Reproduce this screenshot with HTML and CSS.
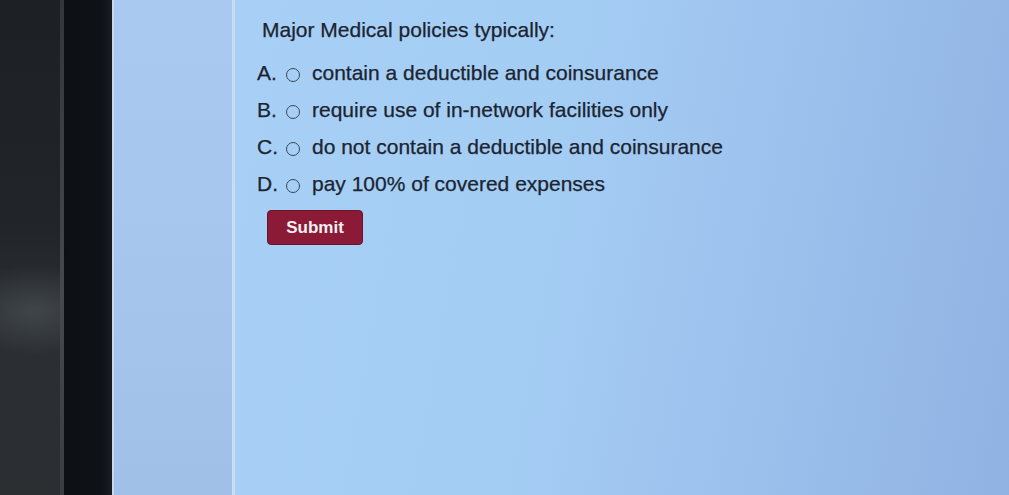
FILE: index.html
```html
<!DOCTYPE html>
<html>
<head>
<meta charset="utf-8">
<link rel="stylesheet" href="styles.css">
<title>Quiz</title>
</head>
<body>
<div class="screen">
  <div class="bezel">
    <div class="bezel-outer"></div>
    <div class="bezel-edge"></div>
    <div class="bezel-inner"></div>
  </div>
  <div class="sidebar"></div>
  <div class="divider"></div>
  <main class="content">
    <p class="question">Major Medical policies typically:</p>
    <ul class="options">
      <li class="option"><span class="letter">A.</span><span class="radio"></span><span class="text">contain a deductible and coinsurance</span></li>
      <li class="option"><span class="letter">B.</span><span class="radio"></span><span class="text">require use of in-network facilities only</span></li>
      <li class="option"><span class="letter">C.</span><span class="radio"></span><span class="text">do not contain a deductible and coinsurance</span></li>
      <li class="option"><span class="letter">D.</span><span class="radio"></span><span class="text">pay 100% of covered expenses</span></li>
    </ul>
    <button class="submit">Submit</button>
  </main>
</div>
</body>
</html>
```
FILE: styles.css
```css
* { box-sizing: border-box; }
html, body { margin: 0; padding: 0; }
body {
  width: 1009px;
  height: 495px;
  overflow: hidden;
  font-family: "Liberation Sans", Arial, sans-serif;
  color: #1b2430;
}
.screen {
  display: flex;
  width: 1009px;
  height: 495px;
}
.bezel {
  display: flex;
  width: 112px;
  flex: none;
}
.bezel-outer {
  width: 60px;
  background:
    radial-gradient(ellipse 80px 45px at 35px 310px, rgba(85,92,98,0.5), transparent),
    linear-gradient(180deg, #1d2125 0%, #212529 45%, #2b2f33 65%, #2b2f32 100%);
}
.bezel-edge {
  width: 4px;
  background: linear-gradient(180deg, #33373b, #464a4e 60%, #3a3e42);
}
.bezel-inner {
  flex: 1;
  background: linear-gradient(90deg, #0c1014, #0f1317 80%, #1a1e23);
}
.sidebar {
  width: 120px;
  flex: none;
  background: linear-gradient(180deg, #a9c9f1 0%, #a6c6ee 50%, #a1c0e8 100%);
  border-left: 2px solid #c4d8ef;
}
.divider {
  width: 3px;
  flex: none;
  background: #c9dcf0;
}
.content {
  flex: 1;
  padding: 17px 0 0 22px;
  background:
    linear-gradient(100deg, #a8d0f6 0%, #a4cdf4 40%, #9cc0ec 70%, #8fb2e3 100%);
}
.question {
  margin: 0 0 17px 5px;
  font-size: 21px;
  line-height: 26px;
  -webkit-text-stroke: 0.25px #1b2430;
}
.options {
  list-style: none;
  margin: 0;
  padding: 0;
  display: flex;
  flex-direction: column;
  gap: 11px;
}
.option {
  display: flex;
  align-items: center;
  height: 26px;
  font-size: 21px;
  -webkit-text-stroke: 0.25px #1b2430;
}
.letter {
  width: 29px;
}
.radio {
  width: 14px;
  height: 14px;
  border: 1.3px solid #3a4653;
  border-radius: 50%;
  margin-right: 12px;
  margin-top: 3px;
}
.submit {
  display: block;
  margin: 13px 0 0 10px;
  width: 96px;
  height: 35px;
  background: #8a1a36;
  color: #f4f0f4;
  border: 1px solid #6e1429;
  border-radius: 4px;
  font-family: "Liberation Sans", Arial, sans-serif;
  font-weight: bold;
  font-size: 17px;
  padding: 0;
}
```
